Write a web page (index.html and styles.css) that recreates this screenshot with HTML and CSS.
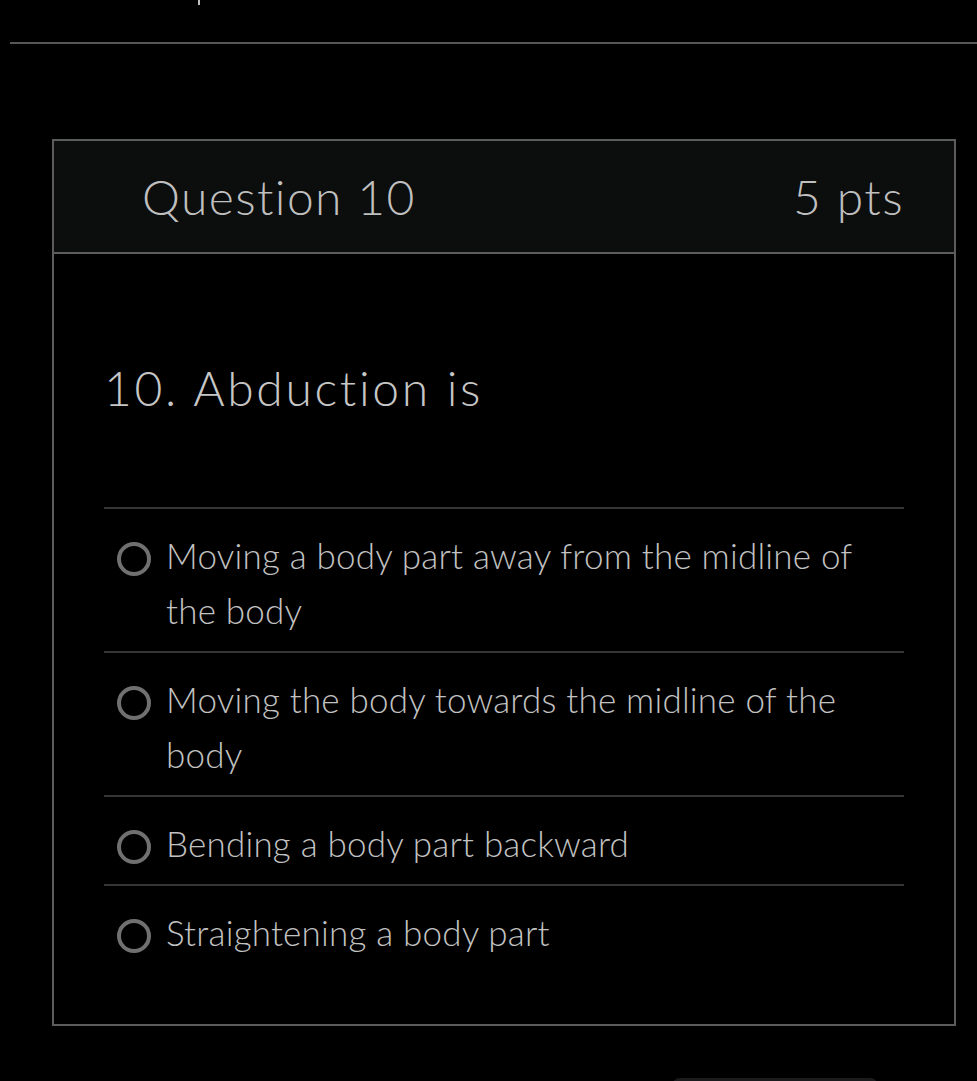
FILE: index.html
```html
<!DOCTYPE html>
<html lang="en">
<head>
<meta charset="utf-8">
<title>Question 10</title>
<link rel="stylesheet" href="styles.css">
</head>
<body>
<div class="top">
  <span class="tick"></span>
</div>
<div class="rule"></div>
<div class="card">
  <div class="card-header">
    <span class="q-title">Question 10</span>
    <span class="q-points">5 pts</span>
  </div>
  <div class="card-body">
    <p class="q-text">10. Abduction is</p>
    <div class="answers">
      <label class="answer"><span class="radio"></span><span class="answer-text">Moving a body part away from the midline of the body</span></label>
      <label class="answer"><span class="radio"></span><span class="answer-text">Moving the body towards the midline of the body</span></label>
      <label class="answer"><span class="radio"></span><span class="answer-text">Bending a body part backward</span></label>
      <label class="answer"><span class="radio"></span><span class="answer-text">Straightening a body part</span></label>
    </div>
  </div>
</div>
<div class="footer">
  <div class="next-btn"></div>
</div>
</body>
</html>
```

FILE: styles.css
```css
html, body {
  margin: 0;
  padding: 0;
  background: #000;
}
body {
  font-family: "Lato Light", Lato, "Liberation Sans", sans-serif;
  font-weight: 300;
  color: #c2c2c2;
  overflow: hidden;
  height: 1081px;
}
.top {
  height: 42px;
}
.tick {
  display: block;
  width: 2px;
  height: 5px;
  margin-left: 198px;
  background: #bdbdbd;
}
.rule {
  height: 2px;
  margin-left: 10px;
  background: #575757;
}
.card {
  margin: 95px 0 0 52px;
  width: 904px;
  box-sizing: border-box;
  border: 2px solid #5c5c5c;
}
.card-header {
  height: 111px;
  background: #0c0d0d;
  border-bottom: 2px solid #5c5c5c;
  display: flex;
  align-items: center;
  justify-content: space-between;
  padding: 0 50px 0 88px;
  font-size: 48px;
  color: #bfbfbf;
}
.q-title,
.q-points {
  letter-spacing: 1.4px;
}
.card-body {
  padding: 0 50px 51px 50px;
}
.q-text {
  margin: 0;
  padding-top: 105px;
  font-size: 48px;
  line-height: 58px;
  letter-spacing: 2.7px;
  color: #c6c6c6;
}
.answers {
  margin-top: 90px;
}
.answer {
  display: flex;
  align-items: flex-start;
  border-top: 2px solid #363636;
  padding: 19px 0 13px 13px;
}
.radio {
  flex: none;
  width: 34px;
  height: 34px;
  box-sizing: border-box;
  border: 4px solid #707070;
  border-radius: 50%;
  margin-top: 14px;
  margin-right: 15px;
}
.answer-text {
  font-size: 35px;
  line-height: 55px;
  letter-spacing: 0.2px;
  color: #c2c2c2;
}
.footer {
  display: flex;
  padding-top: 52px;
  padding-left: 672px;
}
.next-btn {
  width: 206px;
  height: 40px;
  border-radius: 8px;
  background: #1b1c1d;
}
```
